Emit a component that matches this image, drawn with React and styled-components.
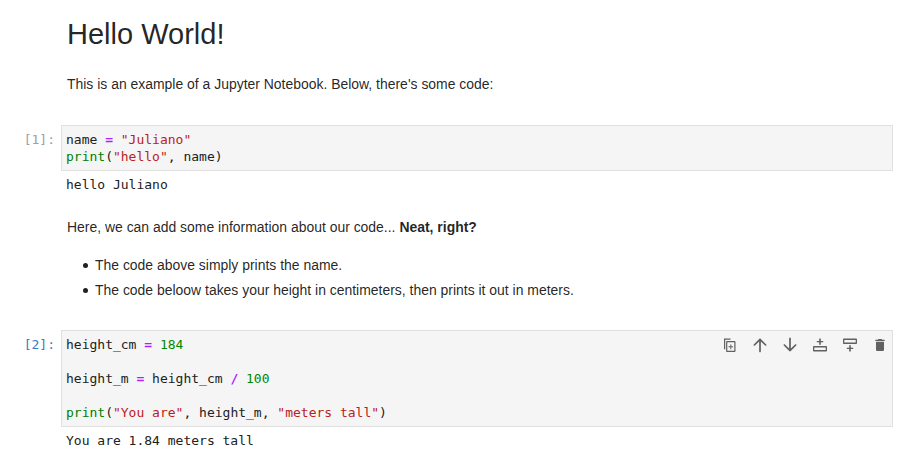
import React from "react";
import styled, { createGlobalStyle } from "styled-components";

const Global = createGlobalStyle`
  html, body { margin: 0; padding: 0; background: #fff; }
  body { font-family: "Liberation Sans", Arial, sans-serif; color: rgba(0, 0, 0, 0.87); overflow: hidden; }
`;

const Notebook = styled.div`
  width: 899px;
  height: 460px;
  overflow: hidden;
  padding: 14px 6px 0 0;
  box-sizing: border-box;
`;

const Markdown = styled.div`
  padding-left: 67px;
  padding-right: 10px;
  font-size: 13.95px;
  line-height: 20px;
  margin-top: ${(p) => p.$top || 0}px;
`;

const Heading = styled.h1`
  margin: 0 0 19px;
  font-size: 29.03px;
  font-weight: 400;
  line-height: 41px;
`;

const Para = styled.p`
  margin: 0;
`;

const Bullets = styled.ul`
  margin: 18px 0 0;
  padding: 0 0 0 16px;
  list-style: none;
`;

const Bullet = styled.li`
  display: flex;
  align-items: center;
  gap: 7px;
  margin-bottom: 5px;

  &::before {
    content: "";
    flex: none;
    width: 5px;
    height: 5px;
    margin-top: 1px;
    border-radius: 50%;
    background: #212121;
  }
`;

const Cell = styled.div`
  display: grid;
  grid-template-columns: 61px 1fr;
  margin-top: ${(p) => p.$top}px;
`;

const Prompt = styled.div`
  font-family: "DejaVu Sans Mono", monospace;
  font-size: 13px;
  line-height: 17px;
  padding: 6px 6px 0 0;
  text-align: right;
  color: ${(p) => (p.$active ? "#307fc1" : "#a0a0a0")};
`;

const Editor = styled.div`
  position: relative;
  border: 1px solid #e0e0e0;
  background: #f5f5f5;
  padding: 5px 4px;
`;

const Code = styled.pre`
  margin: 0;
  font-family: "DejaVu Sans Mono", monospace;
  font-size: 13px;
  line-height: 17px;
  color: #212121;
  min-height: 17px;
`;

const Output = styled(Code)`
  grid-column: 2;
  padding: 5px 0 0 5px;
`;

const Op = styled.span`
  color: #aa22ff;
  font-weight: 700;
`;
const Str = styled.span`
  color: #ba2121;
`;
const Builtin = styled.span`
  color: #008000;
`;
const Num = styled.span`
  color: #008800;
`;

const Toolbar = styled.div`
  position: absolute;
  top: 6px;
  right: 4px;
  display: flex;
  gap: 14px;
  color: #616161;
`;

const Icon = styled.svg`
  display: block;
  width: 16px;
  height: 16px;
  fill: currentColor;
  transform: ${(p) => (p.$flip ? "rotate(180deg)" : "none")};
`;

const arrow =
  "M1.52899 6.47101C1.23684 6.76316 1.23684 7.23684 1.52899 7.52899C1.82095 7.82095 2.29426 7.82116 2.58649 7.52946L6.25 3.8725V12.75C6.25 13.1642 6.58579 13.5 7 13.5C7.41421 13.5 7.75 13.1642 7.75 12.75V3.8725L11.4027 7.53178C11.6966 7.82619 12.1736 7.82641 12.4677 7.53226C12.7617 7.2383 12.7617 6.7617 12.4677 6.46774L7.70711 1.70711C7.31658 1.31658 6.68342 1.31658 6.29289 1.70711L1.52899 6.47101Z";

const DuplicateIcon = () => (
  <Icon viewBox="0 0 16 16">
    <path d="M2 1.500h6.500v1.200H3.200v9.600H2z" />
    <path
      fillRule="evenodd"
      d="M5.200 4h7.200c.6 0 1.100.5 1.100 1.100v8.800c0 .6-.5 1.100-1.100 1.100H5.200c-.6 0-1.100-.5-1.100-1.100V5.100C4.100 4.500 4.600 4 5.200 4zm.1 1.200v8.600h7V5.200z"
    />
    <path d="M8.300 7.400h1v1.900h1.800v1h-1.800v1.900h-1v-1.900H6.500v-1h1.800z" />
  </Icon>
);

const UpIcon = () => (
  <Icon viewBox="0 0 14 14">
    <path d={arrow} />
  </Icon>
);

const DownIcon = () => (
  <Icon viewBox="0 0 14 14" $flip>
    <path d={arrow} />
  </Icon>
);

const AddAboveIcon = () => (
  <Icon viewBox="0 0 16 16">
    <path fillRule="evenodd" d="M2 9h12c.5 0 1 .4 1 1v3.500c0 .6-.5 1-1 1H2c-.5 0-1-.4-1-1V10c0-.6.5-1 1-1zm.3 1.400v2.700h11.400v-2.700z" />
    <path d="M7.200 1.500h1.600v2.400h2.400v1.400H8.800v2.400H7.200V5.300H4.800V3.900h2.400z" />
  </Icon>
);

const AddBelowIcon = () => (
  <Icon viewBox="0 0 16 16" $flip>
    <path fillRule="evenodd" d="M2 9h12c.5 0 1 .4 1 1v3.500c0 .6-.5 1-1 1H2c-.5 0-1-.4-1-1V10c0-.6.5-1 1-1zm.3 1.400v2.700h11.400v-2.700z" />
    <path d="M7.200 1.500h1.600v2.400h2.400v1.400H8.800v2.400H7.200V5.300H4.800V3.900h2.400z" />
  </Icon>
);

const DeleteIcon = () => (
  <Icon viewBox="0 0 24 24">
    <path d="M6 19c0 1.100.9 2 2 2h8c1.100 0 2-.9 2-2V7H6v12zM19 4h-3.500l-1-1h-5l-1 1H5v2h14V4z" />
  </Icon>
);

export default function App() {
  return (
    <Notebook>
      <Global />
      <Markdown>
        <Heading>Hello World!</Heading>
        <Para>This is an example of a Jupyter Notebook. Below, there's some code:</Para>
      </Markdown>

      <Cell $top={31}>
        <Prompt>[1]:</Prompt>
        <Editor>
          <Code>
            name <Op>=</Op> <Str>"Juliano"</Str>
            {"\n"}
            <Builtin>print</Builtin>(<Str>"hello"</Str>, name)
          </Code>
        </Editor>
        <Output>hello Juliano</Output>
      </Cell>

      <Markdown $top={24}>
        <Para>
          Here, we can add some information about our code... <b>Neat, right?</b>
        </Para>
        <Bullets>
          <Bullet>The code above simply prints the name.</Bullet>
          <Bullet>The code beloow takes your height in centimeters, then prints it out in meters.</Bullet>
        </Bullets>
      </Markdown>

      <Cell $top={30}>
        <Prompt $active>[2]:</Prompt>
        <Editor>
          <Code>
            height_cm <Op>=</Op> <Num>184</Num>
            {"\n\n"}
            height_m <Op>=</Op> height_cm <Op>/</Op> <Num>100</Num>
            {"\n\n"}
            <Builtin>print</Builtin>(<Str>"You are"</Str>, height_m, <Str>"meters tall"</Str>)
          </Code>
          <Toolbar>
            <DuplicateIcon />
            <UpIcon />
            <DownIcon />
            <AddAboveIcon />
            <AddBelowIcon />
            <DeleteIcon />
          </Toolbar>
        </Editor>
        <Output>You are 1.84 meters tall</Output>
      </Cell>
    </Notebook>
  );
}
